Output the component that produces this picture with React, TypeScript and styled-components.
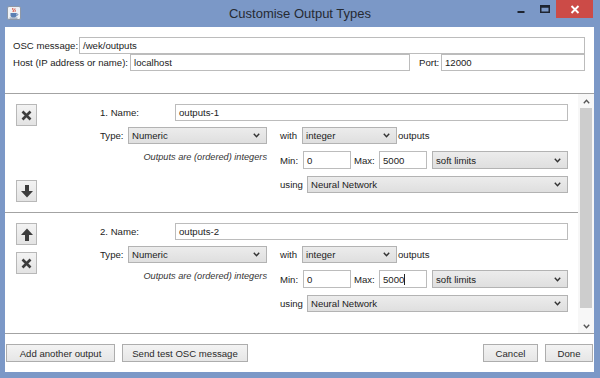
import React from "react";
import styled, { createGlobalStyle } from "styled-components";

const GlobalStyle = createGlobalStyle`
  html, body {
    margin: 0;
    padding: 0;
  }
  body {
    font-family: "Liberation Sans", Arial, sans-serif;
    font-size: 9.6px;
    color: #222;
  }
  * {
    box-sizing: border-box;
  }
`;

const Window = styled.div`
  width: 600px;
  height: 378px;
  background: #7b98c7;
  display: flex;
  flex-direction: column;
  overflow: hidden;
`;

const TitleBar = styled.div`
  height: 27px;
  flex-shrink: 0;
  display: grid;
  grid-template-columns: 1fr auto 1fr;
  align-items: start;
`;

const TitleIcon = styled.div`
  padding: 6px 0 0 7px;
  display: flex;
`;

const TitleText = styled.div`
  font-size: 13px;
  line-height: 28px;
  color: #262a33;
  white-space: nowrap;
`;

const Controls = styled.div`
  display: flex;
  justify-content: flex-end;
  padding-right: 7px;
`;

const ControlButton = styled.div<{ $w: number; $close?: boolean }>`
  width: ${(p) => p.$w}px;
  height: 18px;
  display: flex;
  align-items: center;
  justify-content: center;
  background: ${(p) => (p.$close ? "#cc4b47" : "transparent")};
`;

const Client = styled.div`
  flex: 1;
  margin: 0 6px 6px 5px;
  background: #fff;
  display: flex;
  flex-direction: column;
`;

const Header = styled.div`
  height: 66px;
  flex-shrink: 0;
  padding: 10px 9px 0 8px;
  display: flex;
  flex-direction: column;
`;

const HeaderRow = styled.div`
  height: 17px;
  display: flex;
  align-items: center;
`;

const Label = styled.div<{ $w?: number; $pl?: number }>`
  flex-shrink: 0;
  width: ${(p) => (p.$w ? `${p.$w}px` : "auto")};
  padding-left: ${(p) => p.$pl ?? 0}px;
  white-space: nowrap;
`;

const TextField = styled.div<{ $w?: number }>`
  height: 100%;
  ${(p) => (p.$w ? `width: ${p.$w}px; flex-shrink: 0;` : "flex: 1;")}
  border: 1px solid #bcbcbc;
  background: #fff;
  padding: 0 3px;
  display: flex;
  align-items: center;
  white-space: nowrap;
  overflow: hidden;
`;

const Caret = styled.span`
  display: inline-block;
  width: 1px;
  height: 11px;
  background: #222;
`;

const ScrollPane = styled.div`
  height: 241px;
  flex-shrink: 0;
  border-top: 1px solid #a3a3a3;
  border-bottom: 1px solid #a3a3a3;
  display: flex;
`;

const Viewport = styled.div`
  flex: 1;
  overflow: hidden;
  display: flex;
  flex-direction: column;
`;

const ScrollBar = styled.div`
  width: 16px;
  flex-shrink: 0;
  background: #f7f7f7;
  display: flex;
  flex-direction: column;
  align-items: center;
`;

const ScrollArrow = styled.div`
  height: 14px;
  width: 100%;
  display: flex;
  align-items: center;
  justify-content: center;
`;

const Thumb = styled.div`
  width: 12px;
  height: 200px;
  flex-shrink: 0;
  background: #cdcdcd;
`;

const Grow = styled.div`
  flex: 1;
`;

const Panel = styled.div<{ $last?: boolean }>`
  flex-shrink: 0;
  display: flex;
  padding: 10px 10px 10px 11px;
  border-bottom: ${(p) => (p.$last ? "none" : "1px solid #a3a3a3")};
`;

const ButtonColumn = styled.div`
  width: 21px;
  min-height: 98px;
  flex-shrink: 0;
  display: flex;
  flex-direction: column;
  gap: 7px;
`;

const IconButton = styled.div`
  width: 21px;
  height: 22px;
  border: 1px solid #b8b8b8;
  background: linear-gradient(#f3f3f3, #e3e3e3);
  display: flex;
  align-items: center;
  justify-content: center;
`;

const Form = styled.div`
  flex: 1;
  margin-left: 63px;
  display: flex;
  flex-direction: column;
`;

const Row = styled.div`
  height: 100%;
  display: flex;
  align-items: center;
`;

const NameRow = styled(Row)`
  height: 17px;
`;

const Body = styled.div`
  margin-top: 6px;
  display: grid;
  grid-template-columns: 168px 1fr;
  grid-template-rows: 17px 18px 17px;
  column-gap: 12px;
  row-gap: 7px;
`;

const Hint = styled.div`
  font-style: italic;
  font-size: 9.2px;
  text-align: right;
  padding-right: 1px;
  align-self: start;
  margin-top: 1px;
  color: #333;
  white-space: nowrap;
`;

const ComboBox = styled.div<{ $w?: number; $ml?: number }>`
  height: 100%;
  ${(p) => (p.$w ? `width: ${p.$w}px; flex-shrink: 0;` : "flex: 1;")}
  margin-left: ${(p) => p.$ml ?? 0}px;
  border: 1px solid #b3b3b3;
  background: linear-gradient(#ececec, #dfdfdf);
  padding: 0 6px 0 3px;
  display: flex;
  align-items: center;
  justify-content: space-between;
  white-space: nowrap;
`;

const AfterText = styled.div`
  margin-left: 1px;
  white-space: nowrap;
`;

const Footer = styled.div`
  flex: 1;
  padding: 10px 1px 0 1px;
  display: flex;
  align-items: flex-start;
  gap: 7px;
`;

const Button = styled.div<{ $w: number }>`
  width: ${(p) => p.$w}px;
  height: 18px;
  border: 1px solid #adadad;
  background: linear-gradient(#f3f3f3, #e6e6e6);
  display: flex;
  align-items: center;
  justify-content: center;
  white-space: nowrap;
  color: #2a2a2a;
`;

const Chevron = ({ color = "#333" }: { color?: string }) => (
  <svg width="7" height="5" viewBox="0 0 7 5">
    <path d="M0.8 0.8 L3.5 3.8 L6.2 0.8" fill="none" stroke={color} strokeWidth="1.4" />
  </svg>
);

const ChevronUp = () => (
  <svg width="7" height="5" viewBox="0 0 7 5">
    <path d="M0.8 4.2 L3.5 1.2 L6.2 4.2" fill="none" stroke="#555" strokeWidth="1.3" />
  </svg>
);

const CrossIcon = () => (
  <svg width="11" height="11" viewBox="0 0 11 11">
    <path d="M1.5 1.5 L9.5 9.5 M9.5 1.5 L1.5 9.5" stroke="#3c3c3c" strokeWidth="2.6" />
  </svg>
);

const ArrowIcon = ({ up }: { up?: boolean }) => (
  <svg width="12" height="13" viewBox="0 0 12 13" style={up ? { transform: "rotate(180deg)" } : undefined}>
    <path d="M4 0 H8 V6 H12 L6 12.5 L0 6 H4 Z" fill="#3c3c3c" />
  </svg>
);

const JavaIcon = () => (
  <svg width="14" height="14" viewBox="0 0 14 14">
    <rect x="0.5" y="0.5" width="13" height="13" rx="1.5" fill="#eef1f6" stroke="#8e98a8" />
    <path d="M6 2 C4.5 3.5 7.5 4 6 6 M8 2.5 C7 3.8 9 4.3 8 5.8" fill="none" stroke="#d9442c" strokeWidth="1" />
    <path d="M3.5 7 H9.5 V9.5 C9.5 11 8 11.5 6.5 11.5 C5 11.5 3.5 11 3.5 9.5 Z" fill="#5b7fb3" />
    <path d="M9.5 7.6 C11.3 7.6 11.3 9.6 9.4 9.6" fill="none" stroke="#5b7fb3" strokeWidth="0.9" />
    <rect x="2.5" y="11.6" width="8" height="1" fill="#7d8ea8" />
  </svg>
);

interface OutputSpec {
  index: number;
  name: string;
  first: boolean;
  last: boolean;
  focusedMax?: boolean;
}

const outputs: OutputSpec[] = [
  { index: 1, name: "outputs-1", first: true, last: false },
  { index: 2, name: "outputs-2", first: false, last: true, focusedMax: true },
];

const OutputPanel = ({ output }: { output: OutputSpec }) => (
  <Panel $last={output.last}>
    <ButtonColumn>
      {!output.first && (
        <IconButton>
          <ArrowIcon up />
        </IconButton>
      )}
      <IconButton>
        <CrossIcon />
      </IconButton>
      <Grow />
      {!output.last && (
        <IconButton>
          <ArrowIcon />
        </IconButton>
      )}
    </ButtonColumn>
    <Form>
      <NameRow>
        <Label $w={75}>{output.index}. Name:</Label>
        <TextField>{output.name}</TextField>
      </NameRow>
      <Body>
        <Row>
          <Label $w={28}>Type:</Label>
          <ComboBox $w={139}>
            Numeric
            <Chevron />
          </ComboBox>
        </Row>
        <Row>
          <Label $w={22}>with</Label>
          <ComboBox $w={95}>
            integer
            <Chevron />
          </ComboBox>
          <AfterText>outputs</AfterText>
        </Row>
        <Hint>Outputs are (ordered) integers</Hint>
        <Row>
          <Label $w={23}>Min:</Label>
          <TextField $w={48}>0</TextField>
          <Label $w={28} $pl={3}>
            Max:
          </Label>
          <TextField $w={48}>
            5000
            {output.focusedMax && <Caret />}
          </TextField>
          <ComboBox $ml={5}>
            soft limits
            <Chevron />
          </ComboBox>
        </Row>
        <div />
        <Row>
          <Label $w={27}>using</Label>
          <ComboBox>
            Neural Network
            <Chevron />
          </ComboBox>
        </Row>
      </Body>
    </Form>
  </Panel>
);

export default function App() {
  return (
    <>
      <GlobalStyle />
      <Window>
        <TitleBar>
          <TitleIcon>
            <JavaIcon />
          </TitleIcon>
          <TitleText>Customise Output Types</TitleText>
          <Controls>
            <ControlButton $w={25}>
              <svg width="8" height="8" viewBox="0 0 8 8">
                <rect x="0.5" y="6" width="7" height="2" fill="#1e2430" />
              </svg>
            </ControlButton>
            <ControlButton $w={23}>
              <svg width="10" height="8" viewBox="0 0 10 8">
                <rect x="0.75" y="0.75" width="8.5" height="6.5" fill="none" stroke="#1e2430" strokeWidth="1.5" />
                <rect x="0.75" y="0.75" width="8.5" height="2" fill="#1e2430" />
              </svg>
            </ControlButton>
            <ControlButton $w={37} $close>
              <svg width="10" height="9" viewBox="0 0 10 9">
                <path d="M1.5 1 L8.5 8 M8.5 1 L1.5 8" stroke="#fff" strokeWidth="1.9" />
              </svg>
            </ControlButton>
          </Controls>
        </TitleBar>
        <Client>
          <Header>
            <HeaderRow>
              <Label $w={66}>OSC message:</Label>
              <TextField>/wek/outputs</TextField>
            </HeaderRow>
            <HeaderRow>
              <Label $w={117}>Host (IP address or name):</Label>
              <TextField $w={280}>localhost</TextField>
              <Label $w={31} $pl={9}>
                Port:
              </Label>
              <TextField>12000</TextField>
            </HeaderRow>
          </Header>
          <ScrollPane>
            <Viewport>
              {outputs.map((o) => (
                <OutputPanel key={o.index} output={o} />
              ))}
            </Viewport>
            <ScrollBar>
              <ScrollArrow>
                <ChevronUp />
              </ScrollArrow>
              <Thumb />
              <Grow />
              <ScrollArrow>
                <Chevron color="#555" />
              </ScrollArrow>
            </ScrollBar>
          </ScrollPane>
          <Footer>
            <Button $w={109}>Add another output</Button>
            <Button $w={126}>Send test OSC message</Button>
            <Grow />
            <Button $w={55}>Cancel</Button>
            <Button $w={48}>Done</Button>
          </Footer>
        </Client>
      </Window>
    </>
  );
}
